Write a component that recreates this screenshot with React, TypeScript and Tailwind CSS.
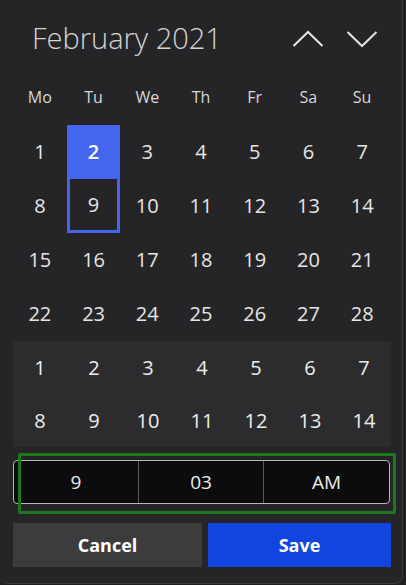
import React from 'react';

const weekdays = ['Mo', 'Tu', 'We', 'Th', 'Fr', 'Sa', 'Su'];

const weeks: number[][] = [
  [1, 2, 3, 4, 5, 6, 7],
  [8, 9, 10, 11, 12, 13, 14],
  [15, 16, 17, 18, 19, 20, 21],
  [22, 23, 24, 25, 26, 27, 28],
];

const nextWeeks: number[][] = [
  [1, 2, 3, 4, 5, 6, 7],
  [8, 9, 10, 11, 12, 13, 14],
];

const Chevron: React.FC<{ up?: boolean }> = ({ up }) => (
  <svg width="32" height="18" viewBox="0 0 32 18" fill="none">
    <path
      d={up ? 'M1.5 16 L16 2 L30.5 16' : 'M1.5 2 L16 16 L30.5 2'}
      stroke="#e4e4e4"
      strokeWidth="2"
    />
  </svg>
);

const DayCell: React.FC<{ day: number; week: number; col: number }> = ({ day, week, col }) => {
  const selected = week === 0 && col === 1;
  const today = week === 1 && col === 1;
  let cls = 'flex h-[54px] items-center justify-center text-[20px] text-[#e6e6e6]';
  if (selected) cls += ' bg-[#4466ee] font-semibold text-white';
  if (today) cls += ' border-[3px] border-t-0 border-[#4466ee]';
  return <div className={cls}>{day}</div>;
};

export default function App() {
  return (
    <div className="h-[585px] w-[406px] bg-[#202022] font-['Open_Sans',sans-serif]">
      <div className="relative h-[584px] w-[403px] rounded-b-lg border-r border-b border-[#3a3a3c] bg-[#252527]">
        {/* header */}
        <div className="flex h-[80px] items-center justify-between pb-[4px] pl-[32px] pr-[24px]">
          <span className="text-[29px] font-light text-[#d4d4d4]">February 2021</span>
          <div className="flex items-center gap-[22px] pt-[2px]">
            <Chevron up />
            <Chevron />
          </div>
        </div>

        {/* weekdays */}
        <div className="mx-[13px] grid grid-cols-7 pb-[13px] pt-[2px]">
          {weekdays.map((d) => (
            <div key={d} className="flex h-[30px] items-center justify-center text-[16px] text-[#d8d8d8]">
              {d}
            </div>
          ))}
        </div>

        {/* current month */}
        <div className="mx-[13px] grid grid-cols-7">
          {weeks.map((w, wi) =>
            w.map((d, ci) => <DayCell key={`${wi}-${ci}`} day={d} week={wi} col={ci} />)
          )}
        </div>

        {/* next month */}
        <div className="mx-[13px] grid w-[378px] grid-cols-7 bg-[#2c2c2e]">
          {nextWeeks.map((w, wi) =>
            w.map((d, ci) => (
              <div
                key={`n-${wi}-${ci}`}
                className="flex h-[53px] items-center justify-center text-[20px] text-[#ececec]"
              >
                {d}
              </div>
            ))
          )}
        </div>

        {/* time picker */}
        <div className="relative mx-[13px] mt-[13px] w-[377px]">
          <div className="grid h-[44px] grid-cols-3 overflow-hidden rounded-[4px] border border-[#b8b8b8] bg-[#0c0c0e] text-[19px] text-[#ececec]">
            <div className="flex items-center justify-center border-r border-[#5a5a5a]">9</div>
            <div className="flex items-center justify-center border-r border-[#5a5a5a]">03</div>
            <div className="flex items-center justify-center">AM</div>
          </div>
          <div className="pointer-events-none absolute left-[5px] top-[-7px] h-[61px] w-[378px] rounded-[2px] border-[3px] border-[#1c7a1c]" />
        </div>

        {/* actions */}
        <div className="mx-[13px] mt-[19px] flex w-[378px] gap-[6px]">
          <button className="h-[44px] w-[189px] bg-[#3c3c3f] text-[18px] font-bold text-white">
            Cancel
          </button>
          <button className="h-[44px] flex-1 bg-[#1045e0] text-[18px] font-bold text-white">
            Save
          </button>
        </div>
      </div>
    </div>
  );
}
